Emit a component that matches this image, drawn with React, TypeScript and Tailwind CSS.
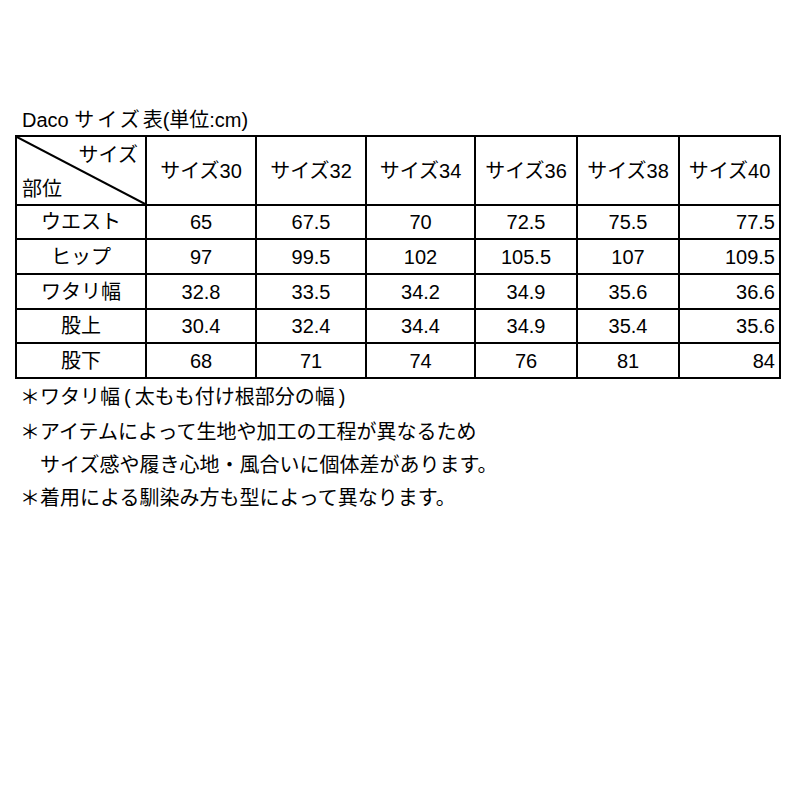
import React from "react";

const sizes = ["サイズ30", "サイズ32", "サイズ34", "サイズ36", "サイズ38", "サイズ40"];
const rows: { label: string; vals: string[]; h: string }[] = [
  { label: "ウエスト", vals: ["65", "67.5", "70", "72.5", "75.5", "77.5"], h: "h-[34px]" },
  { label: "ヒップ", vals: ["97", "99.5", "102", "105.5", "107", "109.5"], h: "h-[35px]" },
  { label: "ワタリ幅", vals: ["32.8", "33.5", "34.2", "34.9", "35.6", "36.6"], h: "h-[35px]" },
  { label: "股上", vals: ["30.4", "32.4", "34.4", "34.9", "35.4", "35.6"], h: "h-[34px]" },
  { label: "股下", vals: ["68", "71", "74", "76", "81", "84"], h: "h-[35px]" },
];

export default function App() {
  return (
    <div
      className="w-[800px] h-[800px] bg-white text-black"
      style={{ fontFamily: '"Liberation Sans", "Noto Sans CJK JP", sans-serif' }}
    >
      <div className="pt-[106px] pl-[22px] text-[20px] leading-[28px]">
        Daco <span className="mr-[-3px] tracking-[3px]">サイズ表</span>(単位:cm)
      </div>
      <table className="ml-[15px] mt-[1px] w-[766px] table-fixed border-collapse border-2 border-black text-[20px] leading-[24px]">
        <colgroup>
          <col className="w-[130px]" />
          <col className="w-[110px]" />
          <col className="w-[110px]" />
          <col className="w-[109px]" />
          <col className="w-[102px]" />
          <col className="w-[102px]" />
          <col className="w-[101px]" />
        </colgroup>
        <tbody>
          <tr className="h-[69px]">
            <td className="relative border-2 border-black p-0">
              <svg className="absolute inset-0 h-full w-full" preserveAspectRatio="none" viewBox="0 0 100 100">
                <line x1="0" y1="0" x2="100" y2="100" stroke="black" strokeWidth="2" vectorEffect="non-scaling-stroke" />
              </svg>
              <div className="relative flex h-[67px] flex-col justify-between">
                <div className="mt-[6px] pr-[7px] text-right">サイズ</div>
                <div className="mb-[3px] pl-[5px] text-left">部位</div>
              </div>
            </td>
            {sizes.map((s) => (
              <td key={s} className="border-2 border-black p-0 text-center align-middle whitespace-nowrap">
                {s}
              </td>
            ))}
          </tr>
          {rows.map((r) => (
            <tr key={r.label} className={r.h}>
              <td className="border-2 border-black p-0 text-center align-middle">{r.label}</td>
              {r.vals.map((v, i) => (
                <td
                  key={i}
                  className={
                    i === 5
                      ? "border-2 border-black p-0 pr-[4px] text-right align-middle"
                      : "border-2 border-black p-0 text-center align-middle"
                  }
                >
                  {v}
                </td>
              ))}
            </tr>
          ))}
        </tbody>
      </table>
      <div className="pl-[20px] pt-[2px] text-[20px] leading-[33px]">
        <div>
          ＊ワタリ幅<span className="mx-[4px]">(</span>太もも付け根部分の幅<span className="ml-[4px]">)</span>
        </div>
        <div className="mt-[2px]">＊アイテムによって生地や加工の工程が異なるため</div>
        <div>　サイズ感や履き心地・風合いに個体差があります。</div>
        <div>＊着用による馴染み方も型によって異なります。</div>
      </div>
    </div>
  );
}
